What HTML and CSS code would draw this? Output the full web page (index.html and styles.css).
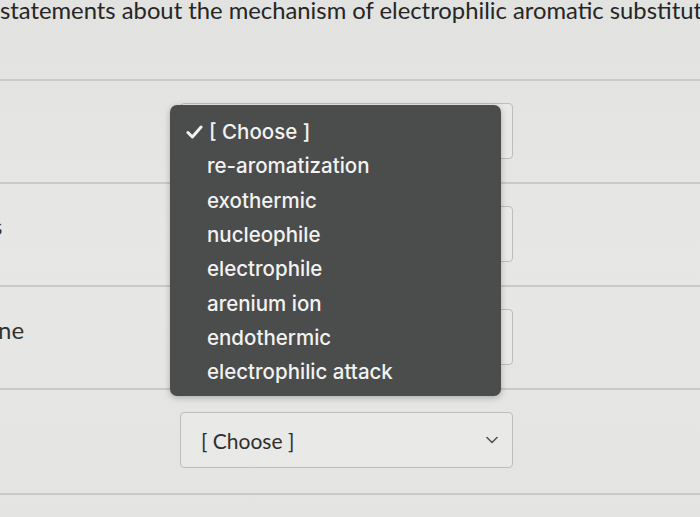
FILE: index.html
```html
<!DOCTYPE html>
<html>
<head>
<meta charset="utf-8">
<link rel="stylesheet" href="styles.css">
</head>
<body>
<div class="page">
  <div class="title">statements about the mechanism of electrophilic aromatic substitution</div>
  <div class="row">
    <div class="label"></div>
    <div class="select"><span class="value">[ Choose ]</span><svg class="chev" viewBox="0 0 12 8"><path d="M1 1.5 L6 6.5 L11 1.5" fill="none" stroke="#555" stroke-width="1.6" stroke-linecap="round" stroke-linejoin="round"/></svg></div>
  </div>
  <div class="row">
    <div class="label"><span class="cut cut-s">s</span></div>
    <div class="select"><span class="value">[ Choose ]</span><svg class="chev" viewBox="0 0 12 8"><path d="M1 1.5 L6 6.5 L11 1.5" fill="none" stroke="#555" stroke-width="1.6" stroke-linecap="round" stroke-linejoin="round"/></svg></div>
  </div>
  <div class="row">
    <div class="label"><span class="cut cut-ne">ne</span></div>
    <div class="select"><span class="value">[ Choose ]</span><svg class="chev" viewBox="0 0 12 8"><path d="M1 1.5 L6 6.5 L11 1.5" fill="none" stroke="#555" stroke-width="1.6" stroke-linecap="round" stroke-linejoin="round"/></svg></div>
  </div>
  <div class="row row-last">
    <div class="label"></div>
    <div class="select"><span class="value">[ Choose ]</span><svg class="chev" viewBox="0 0 12 8"><path d="M1 1.5 L6 6.5 L11 1.5" fill="none" stroke="#555" stroke-width="1.6" stroke-linecap="round" stroke-linejoin="round"/></svg></div>
  </div>
  <div class="rest"></div>

  <ul class="menu">
    <li class="item selected"><svg class="check" viewBox="0 0 16 13"><path d="M1.8 7 L6 11.2 L14.2 1.8" fill="none" stroke="#f2f2f2" stroke-width="2.8" stroke-linecap="round" stroke-linejoin="round"/></svg>[ Choose ]</li>
    <li class="item">re-aromatization</li>
    <li class="item">exothermic</li>
    <li class="item">nucleophile</li>
    <li class="item">electrophile</li>
    <li class="item">arenium ion</li>
    <li class="item">endothermic</li>
    <li class="item">electrophilic attack</li>
  </ul>
</div>
</body>
</html>
```
FILE: styles.css
```css
html, body {
  margin: 0;
  padding: 0;
}
body {
  background: #e4e4e2;
  width: 700px;
  height: 517px;
  overflow: hidden;
}
.page {
  position: relative;
  width: 700px;
  height: 517px;
  overflow: hidden;
  background: linear-gradient(180deg, #e2e2e0 0%, #e7e7e5 50%, #e4e4e2 100%);
  font-family: Lato, "Liberation Sans", sans-serif;
}
.title {
  font-size: 23.8px;
  line-height: 24px;
  color: #262626;
  white-space: nowrap;
  margin-top: -2px;
  height: 81px;
  overflow: hidden;
}
.row {
  height: 101px;
  border-top: 2px solid #c9c9c7;
  display: flex;
  align-items: flex-start;
}
.row-last {
  height: 103px;
}
.label {
  width: 180px;
  height: 100%;
  font-size: 24px;
  color: #333;
}
.cut {
  display: block;
  white-space: nowrap;
}
.cut-s {
  margin-left: -8px;
  margin-top: 27px;
}
.cut-ne {
  margin-left: -2px;
  margin-top: 28px;
}
.select {
  margin-top: 22px;
  width: 333px;
  height: 56px;
  box-sizing: border-box;
  border: 1.5px solid #bdbdbb;
  border-radius: 4px;
  display: flex;
  align-items: center;
  justify-content: space-between;
  padding: 0 14px 0 20px;
  background: rgba(235, 235, 233, 0.6);
}
.value {
  font-size: 21px;
  color: #2f2f2f;
}
.chev {
  width: 12px;
  height: 8px;
}
.rest {
  border-top: 2px solid #c9c9c7;
  height: 30px;
}
.menu {
  position: absolute;
  left: 170px;
  top: 105px;
  width: 331px;
  margin: 0;
  padding: 10px 0 7px 0;
  list-style: none;
  background: #4b4c4c;
  border-radius: 7px;
  box-shadow: 0 2px 6px rgba(0, 0, 0, 0.25);
  box-sizing: border-box;
  font-family: Inter, "Noto Sans", sans-serif;
}
.item {
  height: 34.3px;
  line-height: 34px;
  font-size: 20.5px;
  font-weight: 500;
  color: #f2f2f2;
  padding-left: 37px;
  display: flex;
  align-items: center;
  white-space: nowrap;
}
.item.selected {
  padding-left: 16px;
}
.check {
  width: 17px;
  height: 14px;
  margin-right: 6px;
}
```
